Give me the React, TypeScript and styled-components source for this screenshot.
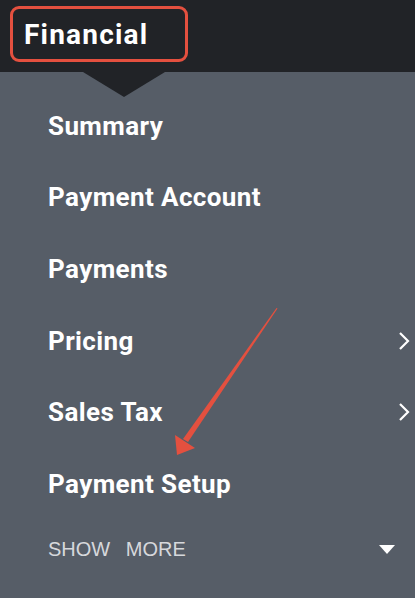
import React from 'react'
import styled, { createGlobalStyle } from 'styled-components'

/**********************************************************************/

const GlobalStyle = createGlobalStyle`
  html, body {
    margin: 0;
    padding: 0;
    background: #565d67;
  }
  body {
    font-family: Roboto, 'Liberation Sans', sans-serif;
  }
`

const Panel = styled.div`
  position: relative;
  width: 415px;
  height: 598px;
  overflow: hidden;
  background: #565d67;
`

const Header = styled.header`
  position: relative;
  height: 72px;
  padding: 6px 0 0 10px;
  box-sizing: border-box;
  background: #212327;

  &::after {
    content: '';
    position: absolute;
    left: 83px;
    bottom: -25px;
    border-left: 41px solid transparent;
    border-right: 41px solid transparent;
    border-top: 25px solid #212327;
  }
`

const Highlight = styled.div`
  display: inline-flex;
  align-items: center;
  width: 178px;
  height: 56px;
  box-sizing: border-box;
  padding-left: 11px;
  border: 3px solid #e4503f;
  border-radius: 9px;
  color: #ffffff;
  font-size: 28px;
  font-weight: 700;
  letter-spacing: 1.2px;
`

const Menu = styled.ul`
  list-style: none;
  margin: 0;
  padding: 18px 0 0;
`

const Item = styled.li`
  display: flex;
  align-items: center;
  justify-content: space-between;
  height: 71.6px;
  padding: 0 4px 0 48px;
  color: #ffffff;
  font-size: 26px;
  font-weight: 700;
  letter-spacing: 0.4px;
`

const ShowMore = styled.li`
  display: flex;
  align-items: center;
  justify-content: space-between;
  height: 60px;
  padding: 0 20px 0 48px;
  color: #d6d8dc;
  font-family: 'Liberation Sans', Arial, sans-serif;
  font-size: 20px;
  word-spacing: 10px;
`

const Caret = styled.span`
  width: 0;
  height: 0;
  border-left: 8px solid transparent;
  border-right: 8px solid transparent;
  border-top: 9px solid #ffffff;
`

const Annotation = styled.svg`
  position: absolute;
  left: 0;
  top: 0;
  pointer-events: none;
`

/**********************************************************************/

const Chevron: React.FC = () => (
  <svg width="14" height="22" viewBox="0 0 14 22">
    <path d="M3 3 L11 11 L3 19" fill="none" stroke="#ffffff" strokeWidth="2.2" />
  </svg>
)

const items: { label: string; sub?: boolean }[] = [
  { label: 'Summary' },
  { label: 'Payment Account' },
  { label: 'Payments' },
  { label: 'Pricing', sub: true },
  { label: 'Sales Tax', sub: true },
  { label: 'Payment Setup' },
]

const App: React.FC = () => (
  <Panel>
    <GlobalStyle />
    <Header>
      <Highlight>Financial</Highlight>
    </Header>
    <Menu>
      {items.map((it) => (
        <Item key={it.label}>
          <span>{it.label}</span>
          {it.sub && <Chevron />}
        </Item>
      ))}
      <ShowMore>
        <span>SHOW MORE</span>
        <Caret />
      </ShowMore>
    </Menu>
    <Annotation width="415" height="598">
      <polygon points="276.5,308 277.5,308.5 188,442 183,439" fill="#e4503f" />
      <polygon points="177,455 175,435 195,448" fill="#e4503f" />
    </Annotation>
  </Panel>
)

export default App
